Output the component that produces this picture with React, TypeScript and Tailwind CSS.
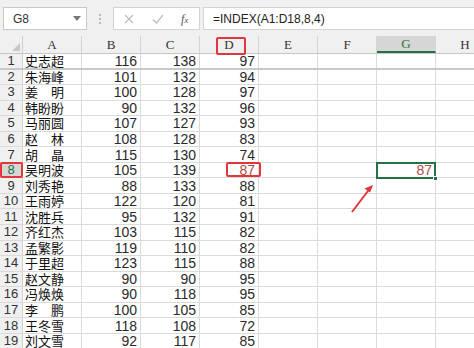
import React from "react";

type Row = [string, number, number, number];

const rows: Row[] = [
  ["史志超", 116, 138, 97],
  ["朱海峰", 101, 132, 94],
  ["姜　明", 100, 128, 97],
  ["韩盼盼", 90, 132, 96],
  ["马丽圆", 107, 127, 93],
  ["赵　林", 108, 128, 83],
  ["胡　晶", 115, 130, 74],
  ["吴明波", 105, 139, 87],
  ["刘秀艳", 88, 133, 88],
  ["王雨婷", 122, 120, 81],
  ["沈胜兵", 95, 132, 91],
  ["齐红杰", 103, 115, 82],
  ["孟繁影", 119, 110, 82],
  ["于里超", 123, 115, 88],
  ["赵文静", 90, 90, 95],
  ["冯焕焕", 90, 118, 95],
  ["李　鹏", 100, 105, 85],
  ["王冬雪", 118, 108, 72],
  ["刘文雪", 92, 117, 85],
];

const cols = ["A", "B", "C", "D", "E", "F", "G", "H"];

const cell = "w-[59px] shrink-0 h-full border-r border-[#dadada] leading-[14px] overflow-hidden";
const num = "flex items-center justify-end pr-[3px] font-['Liberation_Sans',sans-serif] text-[14px] text-[#2a2a2a]";

export default function App() {
  return (
    <div className="relative w-[474px] h-[348px] overflow-hidden bg-white font-['Noto_Sans_CJK_SC',sans-serif]">
      {/* formula bar */}
      <div className="flex h-[36px] bg-[#f0f0f0] pt-[7px]">
        <div className="ml-[3px] w-[84px] h-[23px] bg-white border border-[#c8c8c8] flex items-center justify-between pl-[9px] pr-[5px]">
          <span className="font-['Liberation_Sans',sans-serif] text-[12px] text-[#333]">G8</span>
          <svg width="8" height="5" viewBox="0 0 8 5">
            <path d="M0 0h8L4 5z" fill="#777" />
          </svg>
        </div>
        <div className="w-[26px] flex flex-col items-center justify-center gap-[2px] h-[23px]">
          <span className="w-[2px] h-[2px] bg-[#b8b8b8]" />
          <span className="w-[2px] h-[2px] bg-[#b8b8b8]" />
          <span className="w-[2px] h-[2px] bg-[#b8b8b8]" />
        </div>
        <div className="w-[87px] h-[23px] bg-white border border-[#d4d4d4] flex items-center pl-[10px]">
          <svg width="10" height="10" viewBox="0 0 10 10">
            <path d="M1 1l8 8M9 1l-8 8" stroke="#bdbdbd" strokeWidth="1.2" />
          </svg>
          <svg width="12" height="10" viewBox="0 0 12 10" className="ml-[18px]">
            <path d="M1 5.5l3.5 3.5L11 1" stroke="#bdbdbd" strokeWidth="1.2" fill="none" />
          </svg>
          <span className="ml-[17px] font-['Liberation_Serif',serif] italic text-[12px] text-[#555] leading-none">
            f<span className="text-[9px]">x</span>
          </span>
        </div>
        <div className="ml-[3px] flex-1 h-[23px] bg-white border border-[#d4d4d4] border-r-0 flex items-center pl-[9px]">
          <span className="font-['Liberation_Sans',sans-serif] text-[12px] text-[#222]">=INDEX(A1:D18,8,4)</span>
        </div>
      </div>

      {/* column headers */}
      <div className="flex h-[18px] bg-[#f0f0f0] border-b border-[#c6c6c6]">
        <div className="w-[23px] shrink-0 h-full border-r border-[#cfcfcf] flex items-end justify-end p-[2px]">
          <svg width="8" height="8" viewBox="0 0 8 8">
            <path d="M8 0v8H0z" fill="#c6c6c6" />
          </svg>
        </div>
        {cols.map((c) => (
          <div
            key={c}
            className={
              "w-[59px] shrink-0 h-full flex items-center justify-center border-r border-[#d4d4d4] font-['Liberation_Serif',serif] text-[13px] " +
              (c === "G" ? "bg-[#d6d6d6] border-b-2 border-b-[#217346] text-[#217346]" : "text-[#333]")
            }
          >
            {c}
          </div>
        ))}
      </div>

      {/* rows */}
      {rows.map((r, i) => {
        const sel = i === 7;
        return (
          <div
            key={i}
            className={
              "flex h-[15.55px] " +
              (i === 0 ? "border-b-2 border-[#c8c8c8]" : "border-b border-[#dadada]")
            }
          >
            <div
              className={
                "w-[23px] shrink-0 h-full border-r border-[#cfcfcf] flex items-center justify-center font-['Liberation_Sans',sans-serif] text-[13px] leading-[14px] " +
                (sel ? "bg-[#d6d6d6] text-[#217346]" : "bg-[#f0f0f0] text-[#333]")
              }
            >
              {i + 1}
            </div>
            <div className={cell + " flex items-center pl-[2px] text-[13px] text-[#111] whitespace-pre"}>{r[0]}</div>
            <div className={cell + " " + num}>{r[1]}</div>
            <div className={cell + " " + num}>{r[2]}</div>
            <div className={cell + " " + num + (sel ? " !text-[#b4474a]" : "")}>{r[3]}</div>
            <div className={cell} />
            <div className={cell} />
            <div className={cell + " " + num + " !text-[#b4474a]"}>{sel ? 87 : ""}</div>
            <div className={cell} />
          </div>
        );
      })}

      {/* G8 selection */}
      <div className="absolute left-[376px] top-[162px] w-[60px] h-[17px] border-2 border-[#217346]">
        <div className="absolute right-[-4px] bottom-[-4px] w-[5px] h-[5px] bg-[#217346] border border-white" />
      </div>

      {/* red annotation boxes */}
      <div className="absolute left-[216px] top-[37px] w-[30px] h-[18px] border-2 border-[#e2363c] rounded-[2px]" />
      <div className="absolute left-[0px] top-[162px] w-[23px] h-[16px] border-2 border-[#e2363c] rounded-[2px]" />
      <div className="absolute left-[226px] top-[162px] w-[35px] h-[15px] border-2 border-[#e2363c] rounded-[2px]" />

      {/* arrow */}
      <svg className="absolute left-[340px] top-[180px]" width="40" height="40" viewBox="0 0 40 40">
        <path d="M12 32L31 7" stroke="#e2363c" strokeWidth="2" fill="none" />
        <path d="M33 5l-8.5 3.5L30 12.5z" fill="#e2363c" />
      </svg>
    </div>
  );
}
